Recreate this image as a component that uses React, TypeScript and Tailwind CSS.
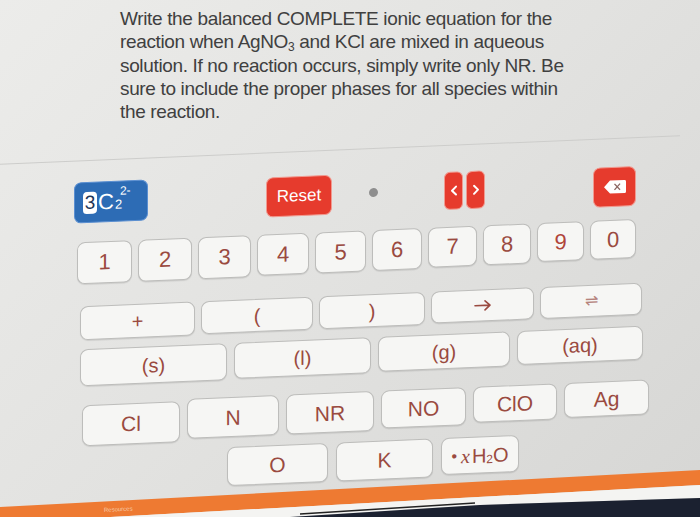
import React from "react";

const btn =
  "flex items-center justify-center rounded-[8px] border border-[#bdbdbb] bg-[#f6f6f4] shadow-[0_1px_1px_rgba(0,0,0,0.10)] text-[#9a4a40] leading-none";

const row1 = [
  { t: "1", c: "w-[55px] h-[42px] text-[#8a4a44]" },
  { t: "2", c: "w-[54px] h-[42px]" },
  { t: "3", c: "w-[53px] h-[42px]" },
  { t: "4", c: "w-[52px] h-[41px]" },
  { t: "5", c: "w-[51px] h-[41px]" },
  { t: "6", c: "w-[50px] h-[41px]" },
  { t: "7", c: "w-[49px] h-[40px]" },
  { t: "8", c: "w-[48px] h-[40px]" },
  { t: "9", c: "w-[47px] h-[39px] text-[#b0453a]" },
  { t: "0", c: "w-[46px] h-[39px] text-[#8f8f8f]" },
];

function Chevron({ dir }: { dir: "l" | "r" }) {
  return (
    <svg width="8" height="12" viewBox="0 0 8 12">
      <polyline
        points={dir === "l" ? "6,2 2,6 6,10" : "2,2 6,6 2,10"}
        fill="none"
        stroke="#fff"
        strokeWidth="2"
        strokeLinecap="round"
        strokeLinejoin="round"
      />
    </svg>
  );
}

export default function App() {
  return (
    <div
      className="relative w-[700px] h-[517px] overflow-hidden bg-[linear-gradient(135deg,#ececea_0%,#e2e2e0_50%,#d6d6d4_100%)]"
      style={{ fontFamily: '"Liberation Sans", Arial, sans-serif' }}
    >
      {/* question text */}
      <div className="h-[124px] pt-[7px] pl-[120px] text-[19px] leading-[23.3px] text-[#404040] tracking-[-0.35px]">
        <div className="whitespace-nowrap">Write the balanced COMPLETE ionic equation for the</div>
        <div className="whitespace-nowrap">
          reaction when AgNO<span className="text-[12px] leading-none relative top-[3px]">3</span> and KCl are mixed in aqueous
        </div>
        <div className="whitespace-nowrap">solution. If no reaction occurs, simply write only NR. Be</div>
        <div className="whitespace-nowrap">sure to include the proper phases for all species within</div>
        <div className="whitespace-nowrap">the reaction.</div>
      </div>

      {/* keypad (photographed at an angle) */}
      <div className="-skew-y-[2.4deg] origin-center">
        <div className="mt-[25px] h-px bg-[#cdcdcb] mr-[20px]" />

        {/* toolbar */}
        <div className="mt-[21px] h-[41px] flex items-start pl-[74px]">
          <div className="w-[74px] h-[41px] rounded-[7px] bg-[#2d6cb5] border border-[#5b8fd1] flex items-center pl-[8px]">
            <span className="w-[14px] h-[22px] rounded-[4px] bg-white flex items-center justify-center text-[19px] text-[#1d3558] leading-none">
              3
            </span>
            <span className="text-[22px] text-white leading-none ml-[1px]">C</span>
            <span className="flex flex-col text-white leading-none ml-[1px]">
              <span className="text-[12px] -mt-[8px] ml-[5px]">2-</span>
              <span className="text-[13px] mt-[1px]">2</span>
            </span>
          </div>
          <div className="ml-[118px] mt-[3px] w-[66px] h-[40px] rounded-[7px] bg-[#e63b2d] border border-[#f19a90] flex items-center justify-center text-white text-[17px]">
            Reset
          </div>
          <div className="ml-[37px] mt-[18px] w-[9px] h-[9px] rounded-full bg-[#8e8e8e]" />
          <div className="ml-[66px] mt-[5px] w-[19px] h-[38px] rounded-[6px] bg-[#e63b2d] border border-[#f19a90] flex items-center justify-center">
            <Chevron dir="l" />
          </div>
          <div className="ml-[3px] mt-[5px] w-[19px] h-[38px] rounded-[6px] bg-[#e63b2d] border border-[#f19a90] flex items-center justify-center">
            <Chevron dir="r" />
          </div>
          <div className="ml-[108px] mt-[7px] w-[43px] h-[40px] rounded-[7px] bg-[#e63b2d] border border-[#f19a90] flex items-center justify-center">
            <svg width="24" height="16" viewBox="0 0 24 16">
              <path d="M7 1.5 H21.5 a1.5 1.5 0 0 1 1.5 1.5 V13 a1.5 1.5 0 0 1 -1.5 1.5 H7 L1 8 Z" fill="#fff" />
              <line x1="11.5" y1="5" x2="17" y2="11" stroke="#8a6460" strokeWidth="1.3" />
              <line x1="17" y1="5" x2="11.5" y2="11" stroke="#8a6460" strokeWidth="1.3" />
            </svg>
          </div>
        </div>

        {/* digits */}
        <div className="mt-[19px] h-[41px] flex items-start gap-[6px] pl-[77px]">
          {row1.map((b) => (
            <div key={b.t} className={`${btn} ${b.c} text-[22px]`}>
              {b.t}
            </div>
          ))}
        </div>

        {/* symbols */}
        <div className="mt-[23px] h-[33px] flex items-start gap-[6px] pl-[80px] text-[20px]">
          <div className={`${btn} w-[115px] h-[34px]`}>+</div>
          <div className={`${btn} w-[112px] h-[33px]`}>(</div>
          <div className={`${btn} w-[106px] h-[33px]`}>)</div>
          <div className={`${btn} w-[103px] h-[32px]`}>
            <svg width="18" height="12" viewBox="0 0 18 12">
              <path d="M1 6 H16 M11 1.5 L16 6 L11 10.5" fill="none" stroke="#9a4a40" strokeWidth="1.6" strokeLinecap="round" strokeLinejoin="round" />
            </svg>
          </div>
          <div className={`${btn} w-[102px] h-[32px] text-[16px] text-[#b5837c]`}>⇌</div>
        </div>

        {/* phases */}
        <div className="mt-[10px] h-[36px] flex items-start gap-[7px] pl-[80px] text-[20px]">
          <div className={`${btn} w-[147px] h-[37px]`}>(s)</div>
          <div className={`${btn} w-[137px] h-[36px]`}>(l)</div>
          <div className={`${btn} w-[132px] h-[35px]`}>(g)</div>
          <div className={`${btn} w-[126px] h-[34px]`}>(aq)</div>
        </div>

        {/* elements */}
        <div className="mt-[18px] h-[38px] flex items-start gap-[7px] pl-[82px] text-[21px]">
          <div className={`${btn} w-[98px] h-[41px] mt-[2px]`}>Cl</div>
          <div className={`${btn} w-[92px] h-[40px]`}>N</div>
          <div className={`${btn} w-[88px] h-[40px]`}>NR</div>
          <div className={`${btn} w-[85px] h-[38px]`}>NO</div>
          <div className={`${btn} w-[84px] h-[36px]`}>ClO</div>
          <div className={`${btn} w-[85px] h-[35px]`}>Ag</div>
        </div>

        <div className="mt-[12px] h-[39px] flex items-start gap-[8px] pl-[227px] text-[21px]">
          <div className={`${btn} w-[101px] h-[39px]`}>O</div>
          <div className={`${btn} w-[97px] h-[39px]`}>K</div>
          <div className={`${btn} w-[78px] h-[37px] text-[20px]`}>
            <span className="mr-[4px] text-[16px]">•</span>
            <span
              className="italic mr-[2px]"
              style={{ fontFamily: '"Liberation Serif", "Times New Roman", serif' }}
            >
              x
            </span>
            <span>H</span>
            <span className="text-[12px] mt-[8px]">2</span>
            <span>O</span>
          </div>
        </div>
      </div>

      {/* device edge at the bottom of the photo */}
      <svg className="absolute left-0 bottom-0" width="700" height="60" viewBox="0 0 700 60">
        <polygon points="0,50 700,13 700,28 0,66" fill="#ee7a32" />
        <polygon points="0,66 700,28 700,41 480,48 290,60 0,60" fill="#f4f4f2" />
        <polygon points="290,60 480,48 700,41 700,60" fill="#1b2130" />
        <line x1="300" y1="57" x2="475" y2="46" stroke="#222" strokeWidth="1.5" />
        <text x="104" y="55" fontSize="6" fill="#f6c9a6" transform="rotate(-3 104 55)">
          Resources
        </text>
      </svg>
    </div>
  );
}
